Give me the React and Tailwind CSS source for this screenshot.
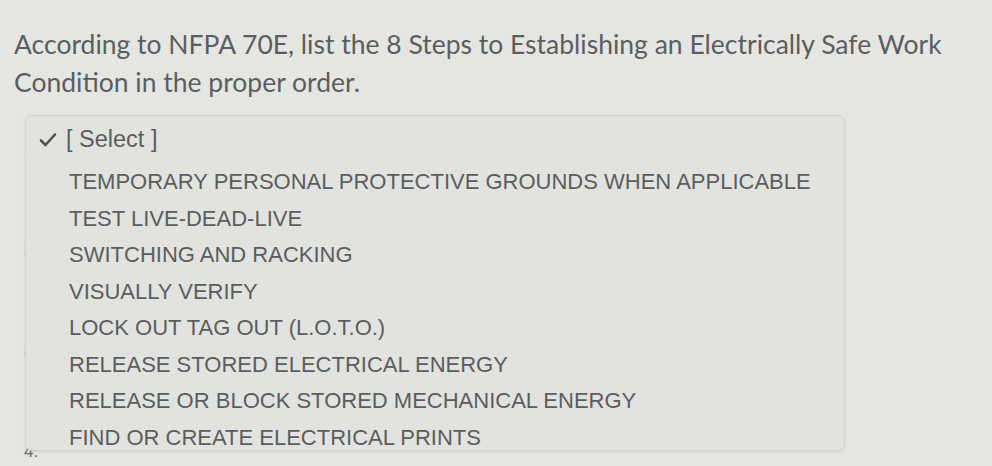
import React from "react";

const steps = [
  "TEMPORARY PERSONAL PROTECTIVE GROUNDS WHEN APPLICABLE",
  "TEST LIVE-DEAD-LIVE",
  "SWITCHING AND RACKING",
  "VISUALLY VERIFY",
  "LOCK OUT TAG OUT (L.O.T.O.)",
  "RELEASE STORED ELECTRICAL ENERGY",
  "RELEASE OR BLOCK STORED MECHANICAL ENERGY",
  "FIND OR CREATE ELECTRICAL PRINTS",
];

function App() {
  return (
    <div className="w-full h-[466px] overflow-hidden bg-[#e5e6e2] px-[14px] pt-[25px] font-['Lato',sans-serif]">
      {/* Question text */}
      <p className="w-[960px] text-[26.5px] leading-[38px] text-[#5b5e61]">
        According to NFPA 70E, list the 8 Steps to Establishing an Electrically
        Safe Work Condition in the proper order.
      </p>

      <div className="relative mt-[14px] h-[400px]">
        {/* Numbered answer slots sitting under the open menu */}
        <div className="flex flex-col pt-[24px] text-[17px] text-[#6a6d70] font-['Liberation_Sans',sans-serif]">
          {["1.", "2.", "3.", "4."].map((n) => (
            <div key={n} className="h-[101px] pl-[10px] leading-[20px]">
              {n}
            </div>
          ))}
        </div>

        {/* Open select menu */}
        <div className="absolute left-[11px] top-0 w-[820px] h-[336px] rounded-[7px] border border-[#d2d3cf] bg-[#e2e3df] shadow-[0_1px_3px_rgba(0,0,0,0.08)] pt-[6px] font-['Liberation_Sans',sans-serif] text-[#5a5d60]">
          <div className="flex items-center h-[36px] pl-[13px] text-[23.5px]">
            <svg
              width="18"
              height="16"
              viewBox="0 0 18 16"
              fill="none"
              stroke="#505356"
              strokeWidth="2.6"
              strokeLinecap="round"
              strokeLinejoin="round"
              className="mr-[9px]"
            >
              <path d="M2 8.5 L6.5 13 L16 2.5" />
            </svg>
            <span>[ Select ]</span>
          </div>
          <ul className="mt-[6px] pl-[43px]">
            {steps.map((s) => (
              <li key={s} className="h-[36.5px] leading-[36.5px] text-[22px] whitespace-nowrap">
                {s}
              </li>
            ))}
          </ul>
        </div>
      </div>
    </div>
  );
}

export default App;
